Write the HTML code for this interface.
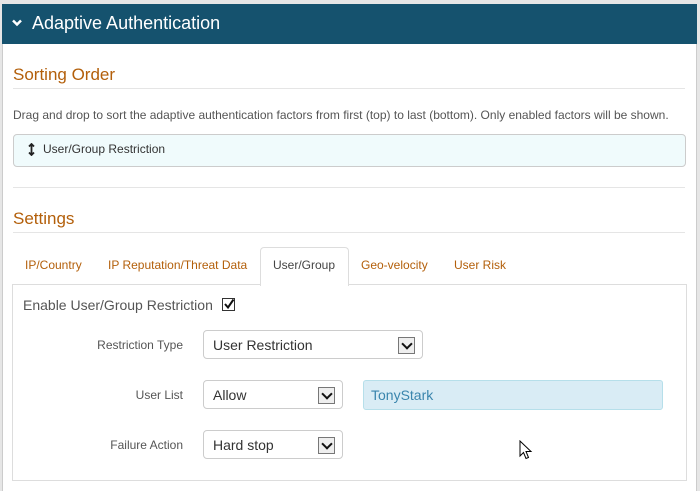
<!DOCTYPE html>
<html><head><style>
*{margin:0;padding:0;box-sizing:border-box}
body{width:700px;height:491px;background:#fff;font-family:"Liberation Sans",Arial,sans-serif;position:relative;overflow:hidden}
.a{position:absolute;white-space:nowrap}
.sel{position:absolute;border:1px solid #ccc;border-radius:4px;background:#fff;font-size:14px;color:#333;padding-left:9px;line-height:29px}
.sel .b{position:absolute;right:7px;top:6px;width:17px;height:17px;border:1px solid #777;background:#eee}
.sel .b:after{content:"";position:absolute;left:4px;top:2px;width:6px;height:6px;border-right:2px solid #111;border-bottom:2px solid #111;transform:rotate(45deg)}
.lbl{position:absolute;right:517px;font-size:12px;color:#555;text-align:right}
.tab{position:absolute;top:258px;font-size:12px;color:#b35f0a}
</style></head><body>
<div class="a" style="left:0;top:0;width:700px;height:4px;background:#e6e6e6"></div>
<div class="a" style="left:0;top:0;width:2px;height:491px;background:#e6e6e6"></div>
<div class="a" style="left:697px;top:0;width:3px;height:491px;background:#e6e6e6"></div>
<div class="a" style="left:2px;top:4px;width:695px;height:40px;background:#15526e"></div>
<svg class="a" style="left:12px;top:19px" width="10" height="8"><path d="M1 1.5 L5 5.5 L9 1.5" stroke="#fff" stroke-width="2.5" fill="none"/></svg>
<div class="a" style="left:32px;top:13px;font-size:18px;color:#fff">Adaptive Authentication</div>
<div class="a" style="left:2px;top:44px;width:1px;height:447px;background:#ccc"></div>
<div class="a" style="left:696px;top:44px;width:1px;height:447px;background:#ccc"></div>
<div class="a" style="left:13px;top:65px;font-size:17px;color:#b35f0a">Sorting Order</div>
<div class="a" style="left:13px;top:88px;width:672px;height:1px;background:#e5e5e5"></div>
<div class="a" style="left:13px;top:108px;font-size:12px;color:#555">Drag and drop to sort the adaptive authentication factors from first (top) to last (bottom). Only enabled factors will be shown.</div>
<div class="a" style="left:13px;top:134px;width:673px;height:33px;background:#f0fbfc;border:1px solid #ccc;border-radius:4px"></div>
<svg class="a" style="left:28px;top:143px" width="7" height="13"><path d="M3.5 1 V12 M1 3.5 L3.5 1 L6 3.5 M1 9.5 L3.5 12 L6 9.5" stroke="#222" stroke-width="1.8" fill="none"/></svg>
<div class="a" style="left:43px;top:142px;font-size:12px;color:#333">User/Group Restriction</div>
<div class="a" style="left:13px;top:187px;width:672px;height:1px;background:#e5e5e5"></div>
<div class="a" style="left:13px;top:209px;font-size:17px;color:#b35f0a">Settings</div>
<div class="a" style="left:13px;top:232px;width:672px;height:1px;background:#e5e5e5"></div>
<div class="a" style="left:12px;top:284px;width:675px;height:197px;border:1px solid #ddd"></div>
<div class="a" style="left:260px;top:247px;width:89px;height:39px;background:#fff;border:1px solid #ddd;border-bottom:none;border-radius:4px 4px 0 0"></div>
<div class="tab" style="left:25px">IP/Country</div>
<div class="tab" style="left:108px">IP Reputation/Threat Data</div>
<div class="tab" style="left:273px;color:#444">User/Group</div>
<div class="tab" style="left:361px">Geo-velocity</div>
<div class="tab" style="left:454px">User Risk</div>
<div class="a" style="left:23px;top:297px;font-size:14px;color:#555">Enable User/Group Restriction</div>
<div class="a" style="left:222px;top:298px;width:13px;height:13px;border:1px solid #333;background:#fff"></div>
<svg class="a" style="left:223px;top:298px" width="12" height="12"><path d="M2 6 L5 9.5 L10.5 1.5" stroke="#111" stroke-width="2" fill="none"/></svg>
<div class="lbl" style="top:338px">Restriction Type</div>
<div class="lbl" style="top:388px">User List</div>
<div class="lbl" style="top:438px">Failure Action</div>
<div class="sel" style="left:203px;top:330px;width:220px;height:29px">User Restriction<div class="b"></div></div>
<div class="sel" style="left:203px;top:380px;width:140px;height:29px">Allow<div class="b"></div></div>
<div class="sel" style="left:203px;top:430px;width:140px;height:29px">Hard stop<div class="b"></div></div>
<div class="a" style="left:363px;top:380px;width:300px;height:30px;background:#d9ecf5;border:1px solid #b6dfea;border-radius:3px;font-size:14px;color:#3a85ad;padding-left:7px;line-height:28px">TonyStark</div>
<svg class="a" style="left:519px;top:440px" width="14" height="22"><path d="M1 1 L1 16 L4.5 12.5 L7 18.5 L9.5 17.5 L7 11.5 L12 11.5 Z" fill="#fff" stroke="#000" stroke-width="1"/></svg>
</body></html>
